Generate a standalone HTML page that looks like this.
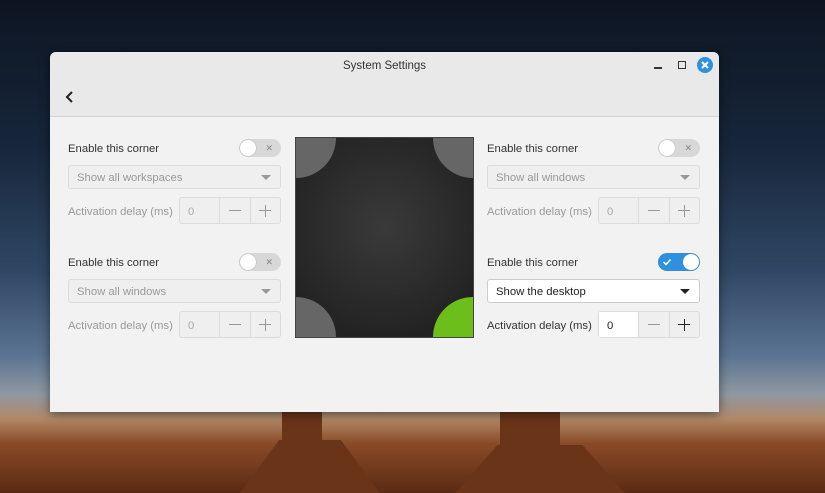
<!DOCTYPE html>
<html><head><meta charset="utf-8"><style>
*{box-sizing:border-box;margin:0;padding:0}
body{width:825px;height:493px;overflow:hidden;position:relative;font-family:"Liberation Sans",sans-serif;
background:linear-gradient(180deg,#0d1522 0%,#17263b 30%,#2f4764 55%,#5a7391 72%,#8f98a2 80%,#b08866 85%,#8a4a26 90%,#5a2a14 100%);}
.mesa{position:absolute;background:#6a3418}
.win{position:absolute;left:50px;top:52px;width:669px;height:360px;background:#f2f2f2;border-radius:6px 6px 0 0;overflow:hidden;box-shadow:0 2px 10px rgba(0,0,0,.5)}
.hdr{position:absolute;left:0;top:0;width:669px;height:65px;background:#e9e9e9;border-bottom:1px solid #d4d4d4}
.title{position:absolute;top:8px;width:100%;text-align:center;font-size:11.5px;color:#333}
.lbl{position:absolute;font-size:11.3px;color:#333;margin-top:2px}
.dim{color:#9a9a9a}
.tog{position:absolute;width:42px;height:18px;border-radius:9px;background:#d8d8d8}
.tog .k{position:absolute;left:1px;top:1px;width:16px;height:16px;border-radius:50%;background:#fff;box-shadow:0 0 1px #888}
.tog .x{position:absolute;right:8px;top:3px;font-size:9px;line-height:12px;color:#888}
.tog.on{background:#2f90dd}
.tog.on .k{left:25px}
.dd{position:absolute;width:213px;height:24px;border:1px solid #dcdcdc;background:#efefef;border-radius:3px;font-size:11.3px;color:#999;padding:6px 8px 0}
.dd .a{position:absolute;right:9px;top:9px;border-left:5px solid transparent;border-right:5px solid transparent;border-top:5px solid #999}
.dd.act{background:#fff;color:#222;border-color:#ccc}
.dd.act .a{border-top-color:#222}
.spin{position:absolute;width:102px;height:27px;border:1px solid #dcdcdc;border-radius:3px;background:#efefef;display:flex}
.spin div{height:100%;display:flex;align-items:center;justify-content:center;font-size:11.3px;color:#aaa;position:relative}
.spin .e{width:41px;justify-content:flex-start;padding-left:8px;padding-top:2px;border-right:1px solid #dcdcdc}
.spin .m{width:31px;border-right:1px solid #dcdcdc}
.spin .p{width:30px}
.spin .m:before,.spin .p:before{content:"";position:absolute;left:50%;top:50%;width:12px;height:1.4px;margin:-0.5px 0 0 -6px;background:#999}
.spin .p:after{content:"";position:absolute;left:50%;top:50%;width:1.4px;height:12px;margin:-5.8px 0 0 -0.5px;background:#999}
.spin.act .e{background:#fff;color:#222}
.spin.act .p:before,.spin.act .p:after{background:#222}
.prev{position:absolute;left:245px;top:85px;width:179px;height:201px;background:radial-gradient(circle at 50% 45%,#3a3a3a,#222 80%);overflow:hidden;border:1px solid #444}
.c{position:absolute;width:80px;height:80px;border-radius:50%;background:#666}
</style></head><body>
<div class="mesa" style="left:282px;top:412px;width:40px;height:35px"></div>
<div class="mesa" style="left:240px;top:440px;width:140px;height:53px;clip-path:polygon(28% 0,72% 0,100% 100%,0 100%)"></div>
<div class="mesa" style="left:500px;top:412px;width:60px;height:40px"></div>
<div class="mesa" style="left:455px;top:445px;width:170px;height:48px;clip-path:polygon(25% 0,75% 0,100% 100%,0 100%)"></div>
<div class="win">
<div class="hdr"><div class="title">System Settings</div>
<div style="position:absolute;left:604px;top:15px;width:8px;height:1.5px;background:#333"></div>
<div style="position:absolute;left:628px;top:9px;width:8px;height:8px;border:1.5px solid #333"></div>
<div style="position:absolute;left:647px;top:5px;width:16px;height:16px;border-radius:50%;background:#2f90dd"><svg width="16" height="16"><path d="M5 5L11 11M11 5L5 11" stroke="#fff" stroke-width="2"/></svg></div>
<svg style="position:absolute;left:14px;top:38px" width="12" height="14"><path d="M8 2 L3 7 L8 12" stroke="#222" stroke-width="2" fill="none"/></svg>
</div>
<div class="lbl" style="left:18px;top:89px">Enable this corner</div>
<div class="tog" style="left:189px;top:87px"><div class="k"></div><div class="x">✕</div></div>
<div class="dd" style="left:18px;top:113px">Show all workspaces<div class="a"></div></div>
<div class="lbl dim" style="left:18px;top:152px">Activation delay (ms)</div>
<div class="spin" style="left:129px;top:145px"><div class="e">0</div><div class="m"></div><div class="p"></div></div>
<div class="lbl" style="left:18px;top:203px">Enable this corner</div>
<div class="tog" style="left:189px;top:201px"><div class="k"></div><div class="x">✕</div></div>
<div class="dd" style="left:18px;top:227px">Show all windows<div class="a"></div></div>
<div class="lbl dim" style="left:18px;top:266px">Activation delay (ms)</div>
<div class="spin" style="left:129px;top:259px"><div class="e">0</div><div class="m"></div><div class="p"></div></div>
<div class="prev">
<div class="c" style="left:-40px;top:-40px"></div><div class="c" style="right:-40px;top:-40px"></div>
<div class="c" style="left:-40px;bottom:-40px"></div><div class="c" style="right:-40px;bottom:-40px;background:#6cbf1b"></div>
</div>
<div class="lbl" style="left:437px;top:89px">Enable this corner</div>
<div class="tog" style="left:608px;top:87px"><div class="k"></div><div class="x">✕</div></div>
<div class="dd" style="left:437px;top:113px">Show all windows<div class="a"></div></div>
<div class="lbl dim" style="left:437px;top:152px">Activation delay (ms)</div>
<div class="spin" style="left:548px;top:145px"><div class="e">0</div><div class="m"></div><div class="p"></div></div>
<div class="lbl" style="left:437px;top:203px">Enable this corner</div>
<div class="tog on" style="left:608px;top:201px"><div class="k"></div><svg style="position:absolute;left:4px;top:4px" width="10" height="10"><path d="M1.5 5L4 7.5L8.5 2.5" stroke="#fff" stroke-width="1.5" fill="none"/></svg></div>
<div class="dd act" style="left:437px;top:227px">Show the desktop<div class="a"></div></div>
<div class="lbl" style="left:437px;top:266px">Activation delay (ms)</div>
<div class="spin act" style="left:548px;top:259px"><div class="e">0</div><div class="m"></div><div class="p"></div></div>
</div>
</body></html>
